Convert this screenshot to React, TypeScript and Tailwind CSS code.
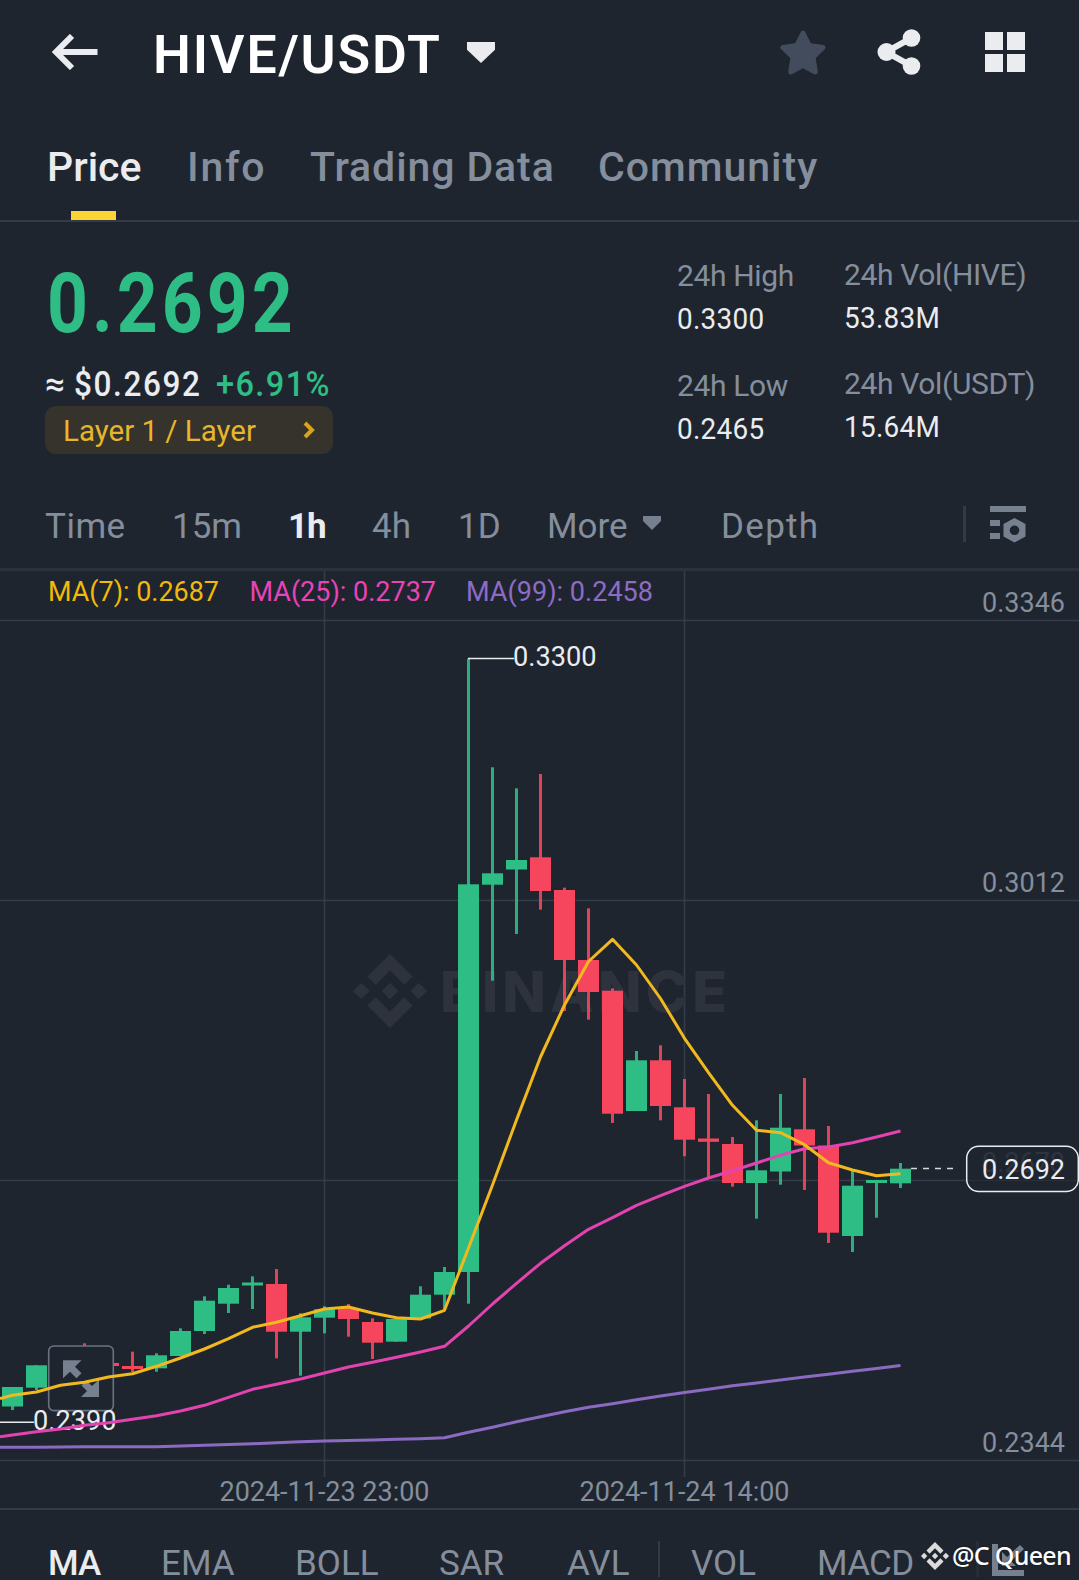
import type { ReactNode } from 'react'
import clsx from 'clsx'

type Candle = {
  open: number // top of the body
  close: number // bottom of the body
  high: number
  low: number
  up: boolean
}

const STEP = 24
const FIRST_X = 12.5
const UP = '#2ebd85'
const DOWN = '#f6465d'

const c = (open: number, close: number, high: number, low: number, up = true): Candle => ({ open, close, high, low, up })

// Chart coordinates share the page's vertical scale
const candles: Candle[] = [
  c(1387, 1406.5, 1387, 1410),
  c(1365.3, 1387.7, 1365.3, 1390),
  c(1362, 1368, 1362, 1368),
  c(1363, 1366, 1343.3, 1366, false),
  c(1363, 1366, 1363, 1366, false),
  c(1366, 1369, 1351.7, 1372, false),
  c(1355.3, 1368.3, 1353.3, 1371.7),
  c(1331, 1356, 1328.3, 1356),
  c(1300.7, 1331, 1296.3, 1334),
  c(1288, 1303.7, 1284.7, 1313),
  c(1282.5, 1285.5, 1276.3, 1309),
  c(1284, 1331.7, 1269, 1358.3, false),
  c(1317.3, 1331.7, 1313.3, 1375.7),
  c(1309.3, 1317.7, 1306.3, 1333.3),
  c(1308, 1319, 1304, 1336.7, false),
  c(1322, 1342.7, 1318.3, 1359, false),
  c(1319, 1341.7, 1319, 1341.7),
  c(1294.7, 1318.5, 1286.3, 1318.5),
  c(1272, 1294.7, 1267, 1309),
  c(884.3, 1272, 658.7, 1303.7),
  c(873.3, 884.7, 767.3, 980.7),
  c(860, 869.5, 788.3, 934),
  c(857.3, 891, 774, 909.7, false),
  c(890, 960, 887.7, 1011, false),
  c(960, 992, 908.3, 1019.7, false),
  c(990.7, 1113.7, 988.3, 1123, false),
  c(1060.3, 1111, 1051, 1111),
  c(1060.3, 1106, 1045.3, 1120.3, false),
  c(1107.3, 1139.7, 1079, 1156.3, false),
  c(1138.5, 1141.8, 1094, 1179, false),
  c(1144, 1183, 1137, 1186.7, false),
  c(1170.3, 1183, 1120.3, 1218.7),
  c(1127.7, 1171.5, 1094, 1184.7),
  c(1129.3, 1145.5, 1078, 1190, false),
  c(1145.5, 1232.7, 1126, 1243, false),
  c(1185.7, 1236, 1170.7, 1252),
  c(1180, 1183, 1180, 1217.7),
  c(1168.7, 1183.3, 1163, 1188),
]

const ma7 = [
  1395.3, 1392, 1385.3, 1382.3, 1377, 1373.7, 1366.3, 1358, 1349, 1338.7, 1327.3, 1322.3, 1315.7, 1309, 1307, 1313,
  1317.7, 1319, 1310.3, 1248, 1185, 1120, 1057, 1005, 961.5, 939.3, 965, 998.5, 1038.3, 1072.7, 1105.3, 1130.3,
  1132.7, 1144.7, 1162.7, 1170, 1175.7, 1173.7,
]
const ma25 = [
  1435, 1431.7, 1429, 1425.3, 1422.7, 1419.3, 1415.7, 1411, 1405.3, 1397.3, 1389.3, 1384.3, 1379, 1373, 1367, 1362.3,
  1357.3, 1352, 1346.3, 1326, 1304, 1283.3, 1263.3, 1245.7, 1229.3, 1217.7, 1205.3, 1195.7, 1186.3, 1178, 1170.7,
  1163, 1155.3, 1148.7, 1147, 1142.7, 1137, 1131,
]
const ma99 = [
  1447.3, 1447.3, 1447, 1446.7, 1446.7, 1446.7, 1446.7, 1446, 1445.3, 1444.5, 1443.7, 1442.7, 1441.8, 1441, 1440.4,
  1440, 1439.3, 1438.7, 1437.7, 1432.3, 1427.3, 1421.7, 1416.7, 1411.7, 1407.3, 1403.7, 1399.7, 1396, 1392.5, 1389.3,
  1385.8, 1383, 1380, 1377, 1374.3, 1371.3, 1368.5, 1365.5,
]

const linePoints = (values: number[], startY: number) =>
  [`0,${startY}`, ...values.map((y, i) => `${FIRST_X + i * STEP},${y}`)].join(' ')

const tabs = [
  { label: 'Price', className: 'w-[140px] text-[#eaecef]', active: true },
  { label: 'Info', className: 'w-[123px] tracking-[1.8px]' },
  { label: 'Trading Data', className: 'w-[288px] tracking-[0.9px]' },
  { label: 'Community', className: 'tracking-[1px]' },
]

const intervals = [
  { label: 'Time', className: 'w-[127px] tracking-[0.5px]' },
  { label: '15m', className: 'w-[116px]' },
  { label: '1h', className: 'w-[84px] font-bold tracking-[-1px] text-[#eaecef]' },
  { label: '4h', className: 'w-[86px]' },
  { label: '1D', className: 'w-[89px]' },
]

const stats = [
  [
    { label: '24h High', value: '0.3300' },
    { label: '24h Low', value: '0.2465' },
  ],
  [
    { label: '24h Vol(HIVE)', value: '53.83M' },
    { label: '24h Vol(USDT)', value: '15.64M' },
  ],
]

const indicators = [
  { label: 'MA', className: 'w-[113px] font-medium tracking-[-1px] text-[#eaecef]' },
  { label: 'EMA', className: 'w-[134px]' },
  { label: 'BOLL', className: 'w-[144px]' },
  { label: 'SAR', className: 'w-[128px]' },
  { label: 'AVL', className: 'w-[91px]' },
]

function Caret({ className }: { className: string }) {
  return (
    <svg viewBox="0 0 28 22" preserveAspectRatio="none" className={className}>
      <path d="M0 0h28v8L14 22 0 8z" fill="currentColor" />
    </svg>
  )
}

function BinanceMark({ className }: { className: string }) {
  return (
    <svg viewBox="0 0 74 74" className={className} fill="currentColor">
      <path d="M37 0l22.5 22.5-8.2 8.3L37 16.5 22.7 30.8l-8.2-8.3z" />
      <path d="M37 74l22.5-22.5-8.2-8.3L37 57.5 22.7 43.2l-8.2 8.3z" />
      <path d="M8.3 28.7l8.3 8.3-8.3 8.3L0 37zM65.7 28.7L74 37l-8.3 8.3-8.3-8.3zM37 28.7l8.3 8.3-8.3 8.3-8.3-8.3z" />
    </svg>
  )
}

function Header() {
  return (
    <header className="flex h-[104px] items-center pl-[52px] text-[#eaecef]">
      <svg viewBox="0 0 46 36" className="h-9 w-[46px]" fill="none" stroke="currentColor" strokeWidth="6">
        <path d="M45.5 18H4M20 2L4 18l16 16" />
      </svg>
      <h1 className="mt-[5px] ml-[55px] w-[314px] text-[53.5px] leading-[60px] font-semibold tracking-[1.8px] text-white">
        HIVE/USDT
      </h1>
      <Caret className="h-[21px] w-7" />
      <svg viewBox="0 0 46 46" className="mt-0.5 ml-[285px] h-[46px] w-[46px] text-[#434c5c]">
        <path
          d="M23 3l6.2 12.6L43 17.5 33 27.3 35.3 42 23 35.3 10.7 42 13 27.3 3 17.5l13.8-1.9z"
          fill="currentColor"
          stroke="currentColor"
          strokeWidth="5"
          strokeLinejoin="round"
        />
      </svg>
      <svg viewBox="0 0 44 46" className="ml-[51px] h-[46px] w-11" fill="currentColor">
        <path d="M34.5 9L9 23l25.5 14" fill="none" stroke="currentColor" strokeWidth="6" />
        <circle cx="9.5" cy="23" r="9" />
        <circle cx="34.5" cy="9" r="8.8" />
        <circle cx="34.5" cy="37" r="8.8" />
      </svg>
      <div className="ml-16 grid grid-cols-[18px_18px] gap-1">
        {[0, 1, 2, 3].map((n) => (
          <span key={n} className="h-[18px] bg-[#eaecef]" />
        ))}
      </div>
    </header>
  )
}

function Tabs() {
  return (
    <nav className="flex h-[118px] border-b-2 border-[#333a47] pl-[47px] text-[41px] leading-[48px] font-medium text-[#848e9c]">
      {tabs.map((tab) => (
        <div key={tab.label} className={clsx('flex shrink-0 flex-col justify-between pt-[39px]', tab.className)}>
          <span className="whitespace-nowrap">{tab.label}</span>
          {tab.active && <span className="ml-6 h-[9px] w-[45px] bg-[#fcd535]" />}
        </div>
      ))}
    </nav>
  )
}

function Summary() {
  return (
    <section className="flex h-[258px] pl-[45px]">
      <div className="w-[632px]">
        <div className="mt-[33px] ml-0.5 h-[98px] w-[320px] origin-left scale-x-[0.86] text-[83px] leading-[98px] font-bold tracking-[4.7px] text-[#2ebd85]">
          0.2692
        </div>
        <div className="mt-2 flex h-[45px] items-center pt-1 text-[35px] font-medium">
          <span className="w-[29px] text-[#eaecef]">≈</span>
          <span className="w-[142px] origin-left scale-x-[0.9] tracking-[1.8px] text-[#eaecef]">$0.2692</span>
          <span className="origin-left scale-x-[0.93] tracking-[1.5px] text-[#2ebd85]">+6.91%</span>
        </div>
        <div className="flex h-12 w-[288px] items-center rounded-[11px] bg-[#35332c] pl-[18px] text-[29.5px] text-[#e8b62a]">
          <span className="w-[240px] pt-0.5">Layer 1 / Layer</span>
          <svg viewBox="0 0 12 18" className="h-[18px] w-3" fill="none" stroke="#d9a41b" strokeWidth="4">
            <path d="M2 2l7 7-7 7" />
          </svg>
        </div>
      </div>
      {stats.map((column, i) => (
        <dl key={i} className={clsx('shrink-0 text-[30px] leading-[42px]', i === 0 ? 'w-[167px] pt-[33px]' : 'pt-8')}>
          {column.map((stat) => (
            <div key={stat.label} className={i === 0 ? 'mb-[26px]' : 'mb-[25px]'}>
              <dt className="tracking-[-0.35px] text-[#848e9c]">{stat.label}</dt>
              <dd className="origin-left translate-y-px scale-x-[0.93] tracking-[0.3px] text-[#eaecef]">{stat.value}</dd>
            </div>
          ))}
        </dl>
      ))}
    </section>
  )
}

function IntervalBar() {
  return (
    <div className="flex h-[91px] items-center border-b-[3px] border-[#2b313d] pl-[45px] text-[35px] text-[#848e9c]">
      {intervals.map((item) => (
        <span key={item.label} className={clsx('shrink-0 pt-1.5', item.className)}>
          {item.label}
        </span>
      ))}
      <span className="w-[96px] pt-1.5">More</span>
      <Caret className="mb-0.5 h-[14px] w-[18px] text-[#76808f]" />
      <span className="ml-[60px] w-[242px] pt-1.5 tracking-[1.3px]">Depth</span>
      <span className="h-9 w-[3px] bg-[#333a47]" />
      <svg viewBox="0 0 36 37" className="ml-[24px] h-[37px] w-9" fill="#76808f">
        <path d="M0 0h36v6H0zM0 14h10v6H0zM0 27h10v6H0z" />
        <path fillRule="evenodd" d="M24.5 12l11 6v12.5l-11 6-11-6V18zM24.5 19.5a4.8 4.8 0 100 9.6 4.8 4.8 0 000-9.6z" />
      </svg>
    </div>
  )
}

function ChartText({ x, y, width, fill, children }: { x: number; y: number; width: number; fill: string; children: ReactNode }) {
  return (
    <text x={x} y={y} textLength={width} lengthAdjust="spacingAndGlyphs" fontSize="28" fill={fill}>
      {children}
    </text>
  )
}

function PriceChart() {
  return (
    <svg viewBox="0 571 1079 937" className="block h-[937px] w-full shrink-0">
      <g stroke="#353c49" strokeWidth="1.6">
        {[620.5, 900.5, 1180.5, 1460.5].map((y) => (
          <line key={y} x1="0" x2="1079" y1={y} y2={y} />
        ))}
        {[324.5, 684.5].map((x) => (
          <line key={x} x1={x} x2={x} y1="571" y2="1477" />
        ))}
      </g>

      {/* watermark */}
      <g fill="#2d323d">
        <path d="M390 954l22.5 22.5-8.2 8.3L390 970.5l-14.3 14.3-8.2-8.3zM390 1028l22.5-22.5-8.2-8.3-14.3 14.3-14.3-14.3-8.2 8.3z" />
        <path d="M361.3 982.7l8.3 8.3-8.3 8.3-8.3-8.3zM418.7 982.7l8.3 8.3-8.3 8.3-8.3-8.3zM390 982.7l8.3 8.3-8.3 8.3-8.3-8.3z" />
        <text x="440" y="1012" fontSize="57" fontWeight="800" textLength="287" className="font-['Inter',sans-serif]">
          BINANCE
        </text>
      </g>

      {candles.map((candle, i) => {
        const x = FIRST_X + i * STEP
        return (
          <g key={i} fill={candle.up ? UP : DOWN}>
            <rect x={x - 1.5} y={candle.high} width="3" height={candle.low - candle.high} opacity="0.9" />
            <rect x={x - 10.5} y={candle.open} width="21" height={candle.close - candle.open} />
          </g>
        )
      })}

      {/* expand button */}
      <rect x="48.7" y="1346" width="64.6" height="64.6" rx="5" fill="#1f252f" stroke="#6a7382" strokeWidth="1.6" />
      <g fill="#76808f">
        <path d="M63 1360.300h18.500l-6.500 6.500 6.500 6.500-5 5-6.500-6.500-7 6.500z" />
        <path d="M99 1397H81l6-6-5.500-5.500 5-5 5.500 5.500 7-6.500z" />
      </g>

      {/* high and low markers */}
      <path d="M468 658.500h46M0 1422.300h34" stroke="#eaecef" strokeWidth="1.6" />
      <ChartText x={513} y={666} width={83.5} fill="#eaecef">0.3300</ChartText>
      <ChartText x={33} y={1430} width={83.5} fill="#eaecef">0.2390</ChartText>

      <g fill="none" strokeWidth="3" strokeLinejoin="round">
        <polyline points={linePoints(ma99, 1447.3)} stroke="#8b6bc2" />
        <polyline points={linePoints(ma25, 1436.7)} stroke="#e343b1" />
        <polyline points={linePoints(ma7, 1398.5)} stroke="#f2b91f" />
      </g>

      <ChartText x={48} y={601} width={171} fill="#f0b90b">MA(7): 0.2687</ChartText>
      <ChartText x={249.5} y={601} width={186.5} fill="#e843b8">MA(25): 0.2737</ChartText>
      <ChartText x={466} y={601} width={187} fill="#8d6bc6">MA(99): 0.2458</ChartText>

      <ChartText x={982} y={612} width={83} fill="#848e9c">0.3346</ChartText>
      <ChartText x={982} y={892} width={83} fill="#848e9c">0.3012</ChartText>
      <ChartText x={982} y={1452} width={83} fill="#848e9c">0.2344</ChartText>
      <ChartText x={219.5} y={1501} width={210} fill="#848e9c">2024-11-23 23:00</ChartText>
      <ChartText x={579.5} y={1501} width={210} fill="#848e9c">2024-11-24 14:00</ChartText>

      {/* last price */}
      <path d="M911 1168.500h44" stroke="#d5d8dd" strokeWidth="1.6" strokeDasharray="6 6" />
      <rect x="966.7" y="1146.2" width="111.6" height="45.3" rx="12" fill="#1f252f" />
      <ChartText x={982} y={1172} width={83} fill="#2e343f">0.2678</ChartText>
      <path d="M967 1180.500h112" stroke="#29303b" />
      <rect x="966.7" y="1146.2" width="111.6" height="45.3" rx="12" fill="none" stroke="#eaecef" strokeWidth="1.5" />
      <ChartText x={982} y={1179} width={83} fill="#eaecef">0.2692</ChartText>
    </svg>
  )
}

function IndicatorBar() {
  return (
    <div className="relative flex h-[72px] items-start border-t-2 border-[#333a47] pt-[31px] pl-[48px] text-[35px] leading-[34px] text-[#848e9c]">
      {indicators.map((item) => (
        <span key={item.label} className={clsx('shrink-0 pt-1.5', item.className)}>
          {item.label}
        </span>
      ))}
      <span className="h-9 w-[2px] bg-[#333a47]" />
      <span className="ml-[31px] w-[126px] pt-1.5">VOL</span>
      <span className="w-[159px] pt-1.5 tracking-[-0.7px]">MACD</span>
      <span className="h-9 w-[3px] bg-[#262d38]" />
      <svg viewBox="0 0 32 32" className="mt-[3px] ml-[13px] h-8 w-8" fill="#76808f">
        <path d="M0 0h6v26h26v6H0z" />
        <path d="M10 22V8l5 5L28 1l4 4-13 12 5 5z" />
      </svg>
      {/* author tag laid over the bar */}
      <div className="absolute top-[30px] left-[921px] flex items-start text-white">
        <BinanceMark className="mt-0.5 h-7 w-7 text-[#dcdcdc]" />
        <span className="-mt-0.5 ml-[3px] font-['Noto_Sans',sans-serif] text-[25px] leading-[34px] font-medium tracking-[-0.7px] whitespace-nowrap [text-shadow:0_0_2px_#0008]">
          @C Queen
        </span>
      </div>
    </div>
  )
}

export default function App() {
  return (
    <main className="flex h-[1580px] w-[1079px] flex-col overflow-hidden bg-[#1f252f] font-['Roboto',sans-serif]">
      <Header />
      <Tabs />
      <Summary />
      <IntervalBar />
      <PriceChart />
      <IndicatorBar />
    </main>
  )
}
